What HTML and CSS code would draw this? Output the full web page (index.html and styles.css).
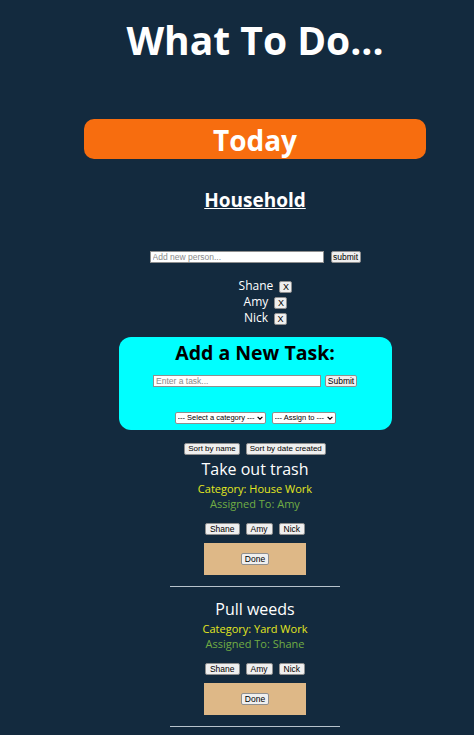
FILE: index.html
```html
<!doctype html>
<html lang="en">
    <head>
        <meta charset="UTF-8" />
        <meta name="viewport" content="width=device-width, initial-scale=1.0" />
        <title>What To Do</title>
        <link rel="stylesheet" href="styles.css">
    </head>
    <body>
        <div class="container">
            <h1 class="title">What To Do...</h1>
            <h2 class="day">Today</h2>
            <h3 class="household">Household</h3>

            <form class="person-form">
                <input class="person-input" type="text" placeholder="Add new person..." />
                <button class="btn" type="button">submit</button>
            </form>

            <ul class="people">
                <li>Shane <button class="btn x-btn" type="button">X</button></li>
                <li>Amy <button class="btn x-btn" type="button">X</button></li>
                <li>Nick <button class="btn x-btn" type="button">X</button></li>
            </ul>

            <div class="new-task">
                <h2>Add a New Task:</h2>
                <div class="task-row">
                    <input class="task-input" type="text" placeholder="Enter a task..." />
                    <button class="btn" type="button">Submit</button>
                </div>
                <div class="select-row">
                    <span class="sel-wrap">
                        <select class="sel sel-cat"><option>--- Select a category ---</option></select>
                        <svg class="chev" viewBox="0 0 10 6" width="6" height="4"><path d="M1 1 L5 5 L9 1" fill="none" stroke="#000" stroke-width="2" /></svg>
                    </span>
                    <span class="sel-wrap">
                        <select class="sel sel-who"><option>--- Assign to ---</option></select>
                        <svg class="chev" viewBox="0 0 10 6" width="6" height="4"><path d="M1 1 L5 5 L9 1" fill="none" stroke="#000" stroke-width="2" /></svg>
                    </span>
                </div>
            </div>

            <div class="sort-row">
                <button class="btn" type="button">Sort by name</button>
                <button class="btn" type="button">Sort by date created</button>
            </div>

            <div class="task">
                <div class="task-name">Take out trash</div>
                <div class="task-cat">Category: House Work</div>
                <div class="task-who">Assigned To: Amy</div>
                <div class="assign-row">
                    <button class="btn" type="button">Shane</button>
                    <button class="btn" type="button">Amy</button>
                    <button class="btn" type="button">Nick</button>
                </div>
                <div class="done-box"><button class="btn" type="button">Done</button></div>
                <hr class="divider" />
            </div>

            <div class="task">
                <div class="task-name">Pull weeds</div>
                <div class="task-cat">Category: Yard Work</div>
                <div class="task-who">Assigned To: Shane</div>
                <div class="assign-row">
                    <button class="btn" type="button">Shane</button>
                    <button class="btn" type="button">Amy</button>
                    <button class="btn" type="button">Nick</button>
                </div>
                <div class="done-box"><button class="btn" type="button">Done</button></div>
                <hr class="divider" />
            </div>
        </div>
    </body>
</html>
```

FILE: styles.css
```css
* {
    margin: 0;
    padding: 0;
    box-sizing: border-box;
}

html, body {
    overflow: hidden;
}

body {
    font-family: "Open Sans", "Noto Sans", sans-serif;
    background: #132a3e;
    color: #fff;
}

.container {
    width: 474px;
    padding-left: 36px;
    text-align: center;
}

.title {
    font-size: 39px;
    font-weight: 700;
    line-height: 48px;
    padding-top: 16px;
}

.day {
    width: 342px;
    height: 40px;
    margin: 55px auto 0;
    background: #f76d0f;
    border-radius: 10px;
    font-size: 28px;
    font-weight: 700;
    line-height: 42px;
}

.household {
    margin-top: 28px;
    font-size: 19px;
    font-weight: 700;
    line-height: 26px;
    text-decoration: underline;
}

.btn {
    font-family: "Liberation Sans", Arial, sans-serif;
    font-size: 8.5px;
    color: #000;
    background: #efefef;
    border: 1px solid #8f8f8f;
    border-radius: 2px;
    height: 12px;
    line-height: 10px;
    padding: 0 3px;
}

.person-form {
    display: flex;
    justify-content: center;
    align-items: center;
    gap: 7px;
    margin-top: 38px;
}

.person-input,
.task-input {
    font-family: "Liberation Sans", Arial, sans-serif;
    font-size: 8.5px;
    height: 12px;
    padding: 0 2px;
    border: 1px solid #8f8f8f;
    background: #fff;
}

.person-input::placeholder,
.task-input::placeholder {
    color: #8a8a8a;
}

.person-input {
    width: 174px;
}

.person-form .btn {
    width: 30px;
    padding: 0;
}

.people {
    list-style: none;
    margin-top: 15px;
    padding-left: 21px;
    font-size: 12px;
    line-height: 16px;
}

.x-btn {
    font-size: 9px;
    width: 13px;
    height: 12px;
    padding: 0;
    margin-left: 3px;
    vertical-align: middle;
}

.new-task {
    width: 273px;
    height: 93px;
    margin: 11px auto 0;
    background: #00ffff;
    border-radius: 12px;
    color: #000;
    padding-top: 2px;
}

.new-task h2 {
    font-size: 19.5px;
    font-weight: 700;
    line-height: 28px;
}

.task-row {
    display: flex;
    justify-content: center;
    align-items: center;
    gap: 4px;
    margin-top: 8px;
}

.task-input {
    width: 168px;
}

.task-row .btn {
    width: 32px;
    padding: 0;
}

.select-row {
    display: flex;
    justify-content: center;
    gap: 6px;
    margin-top: 25px;
}

.sel-wrap {
    position: relative;
    display: flex;
}

.sel {
    appearance: none;
    font-family: "Liberation Sans", Arial, sans-serif;
    font-size: 7.5px;
    height: 12px;
    line-height: 10px;
    padding: 0 9px 0 2px;
    border: 1px solid #8f8f8f;
    border-radius: 2px;
    background: #fff;
    color: #000;
}

.sel-cat {
    width: 91px;
}

.sel-who {
    width: 64px;
}

.chev {
    position: absolute;
    right: 3px;
    top: 4px;
    pointer-events: none;
}

.sort-row {
    display: flex;
    justify-content: center;
    gap: 6px;
    margin-top: 13px;
}

.sort-row .btn {
    font-size: 8px;
}

.task {
    width: 170px;
    margin: 0 auto;
}

.task-name {
    font-size: 16px;
    line-height: 24px;
    margin-top: 2px;
}

.task-cat {
    color: #e3e81e;
    font-size: 11px;
    line-height: 15px;
}

.task-who {
    color: #71ad44;
    font-size: 11px;
    line-height: 15px;
}

.assign-row {
    display: flex;
    justify-content: center;
    gap: 6px;
    margin-top: 12px;
}

.assign-row .btn {
    padding: 0 4px;
}

.done-box {
    width: 102px;
    height: 32px;
    margin: 8px auto 0;
    background: #deb887;
    display: flex;
    justify-content: center;
    align-items: center;
}

.divider {
    border: none;
    border-top: 1px solid #b8c3cc;
    margin-top: 11px;
    margin-bottom: 10px;
}
```
